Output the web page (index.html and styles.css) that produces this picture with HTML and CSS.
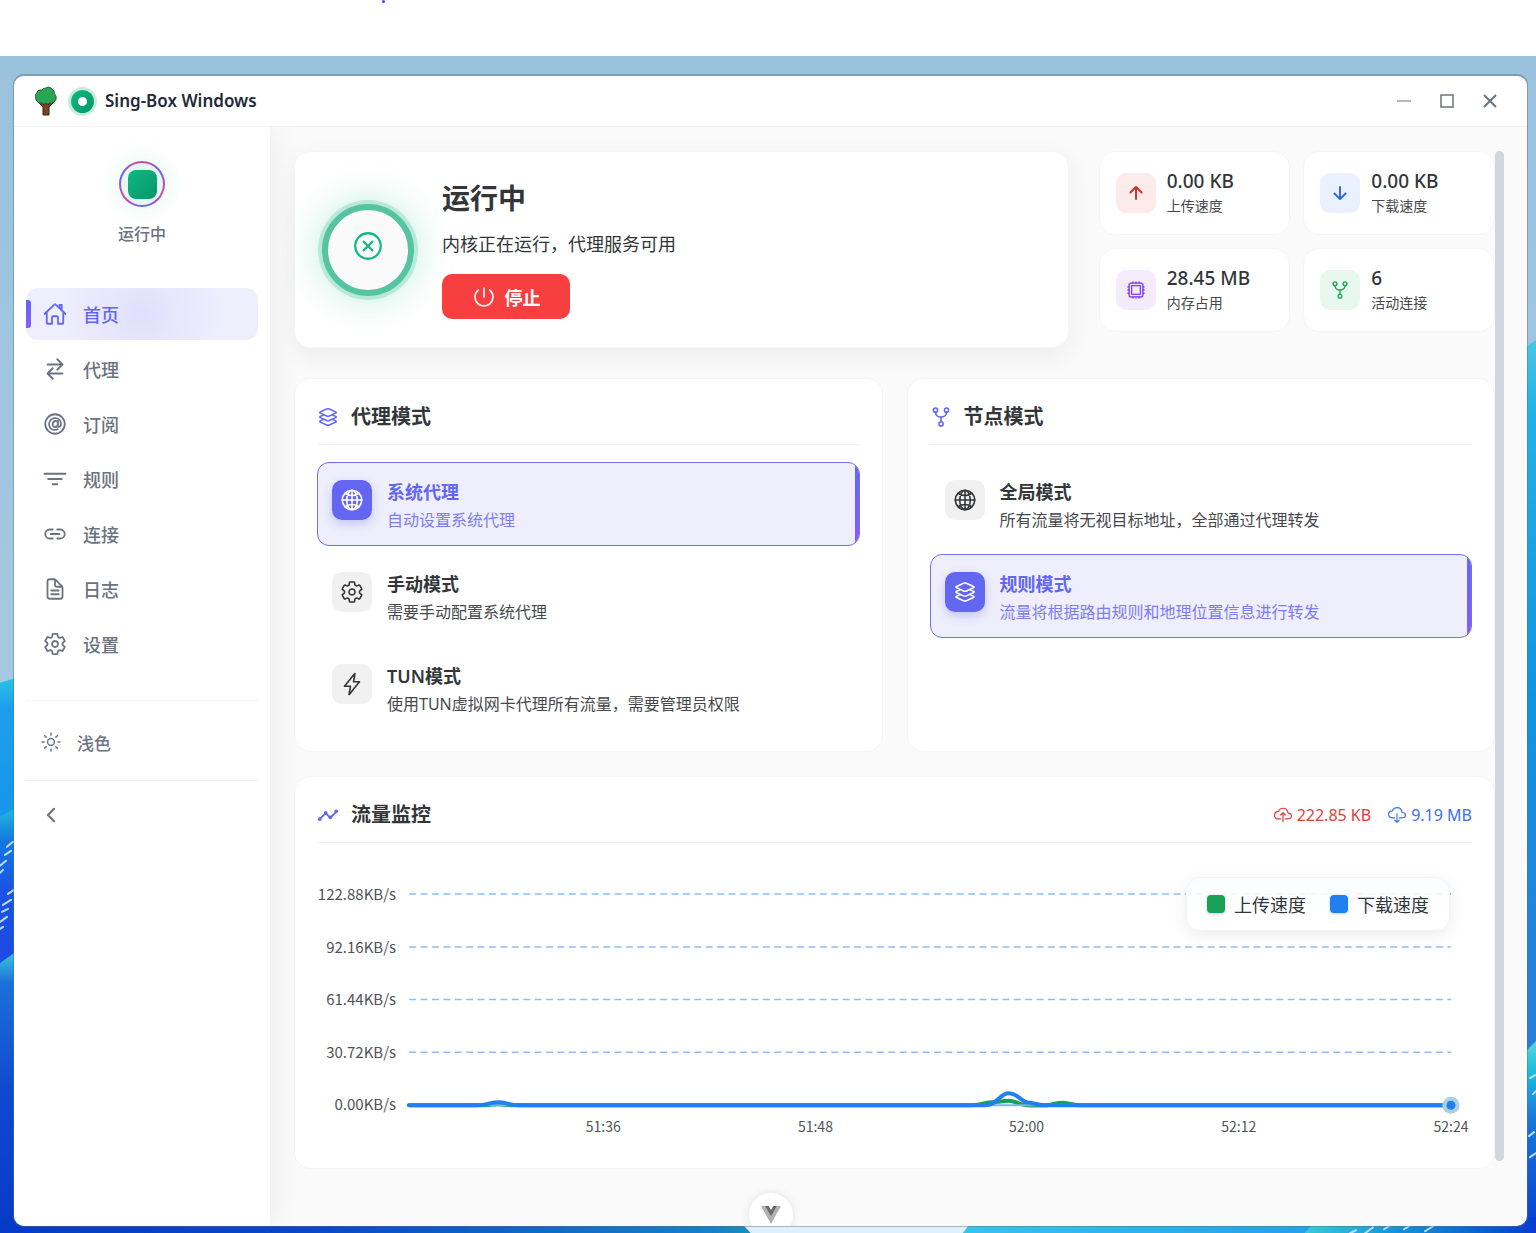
FILE: index.html
```html
<!DOCTYPE html>
<html lang="zh-CN">
<head>
<meta charset="utf-8">
<meta name="viewport" content="width=device-width, initial-scale=1">
<title>Sing-Box Windows</title>
<link rel="stylesheet" href="styles.css">
</head>
<body>
<svg class="sprite" aria-hidden="true">
  <symbol id="home" viewBox="0 0 512 512"><path d="M80 212v236a16 16 0 0 0 16 16h96V328a24 24 0 0 1 24-24h80a24 24 0 0 1 24 24v136h96a16 16 0 0 0 16-16V212M480 256L266.89 52c-5-5.28-16.69-5.34-21.78 0L32 256M400 179V64h-48v69"/></symbol>
  <symbol id="swap" viewBox="0 0 512 512"><path d="M304 48l112 112-112 112M398.87 160H96M208 464L96 352l112-112M114 352h302"/></symbol>
  <symbol id="at" viewBox="0 0 512 512"><circle cx="256" cy="256" r="208"/><path d="M320 254c-4 36-28 66-64 66-34 0-54-24-50-64 4-36 30-64 64-64 36 0 54 26 50 62zM322 196l-9 78c-3 28 8 42 28 42 26 0 41-30 41-62 0-72-52-124-122-124-76 0-130 56-130 126 0 76 54 126 128 126 22 0 42-5 58-14"/></symbol>
  <symbol id="filter" viewBox="0 0 512 512"><path d="M32 144h448M112 256h288M208 368h96"/></symbol>
  <symbol id="link" viewBox="0 0 512 512"><path d="M208 352h-64a96 96 0 0 1 0-192h64M304 160h64a96 96 0 0 1 0 192h-64M163.29 256h187.42"/></symbol>
  <symbol id="doc" viewBox="0 0 512 512"><path d="M416 221.25V416a48 48 0 0 1-48 48H144a48 48 0 0 1-48-48V96a48 48 0 0 1 48-48h98.75a32 32 0 0 1 22.62 9.37l141.26 141.26a32 32 0 0 1 9.37 22.62zM256 56v120a32 32 0 0 0 32 32h120M176 288h160M176 368h160"/></symbol>
  <symbol id="gear" viewBox="0 0 512 512"><path d="M262.29 192.31a64 64 0 1 0 57.4 57.4 64.13 64.13 0 0 0-57.4-57.4zM416.39 256a154.34 154.34 0 0 1-1.53 20.79l45.21 35.46a10.81 10.81 0 0 1 2.45 13.75l-42.77 74a10.81 10.81 0 0 1-13.14 4.59l-44.9-18.08a16.11 16.11 0 0 0-15.17 1.75A164.48 164.48 0 0 1 325 400.8a15.94 15.94 0 0 0-8.82 12.14l-6.73 47.89a11.08 11.08 0 0 1-10.68 9.17h-85.54a11.11 11.11 0 0 1-10.69-8.87l-6.72-47.82a16.07 16.07 0 0 0-9-12.22 155.3 155.3 0 0 1-21.46-12.57 16 16 0 0 0-15.11-1.71l-44.89 18.07a10.81 10.81 0 0 1-13.14-4.58l-42.77-74a10.8 10.8 0 0 1 2.45-13.75l38.21-30a16.05 16.05 0 0 0 6-14.08c-.36-4.17-.58-8.33-.58-12.5s.21-8.27.58-12.35a16 16 0 0 0-6.07-13.94l-38.19-30A10.81 10.81 0 0 1 49.48 186l42.77-74a10.81 10.81 0 0 1 13.14-4.59l44.9 18.08a16.11 16.11 0 0 0 15.17-1.75A164.48 164.48 0 0 1 187 111.2a15.94 15.94 0 0 0 8.82-12.14l6.73-47.89A11.08 11.08 0 0 1 213.23 42h85.54a11.11 11.11 0 0 1 10.69 8.87l6.72 47.82a16.07 16.07 0 0 0 9 12.22 155.3 155.3 0 0 1 21.46 12.57 16 16 0 0 0 15.11 1.71l44.89-18.07a10.81 10.81 0 0 1 13.14 4.58l42.77 74a10.8 10.8 0 0 1-2.45 13.75l-38.21 30a16.05 16.05 0 0 0-6.05 14.08c.33 4.14.55 8.3.55 12.47z"/></symbol>
  <symbol id="sun" viewBox="0 0 512 512"><path d="M256 48v48M256 416v48M403.08 108.92l-33.94 33.94M142.86 369.14l-33.94 33.94M464 256h-48M96 256H48M403.08 403.08l-33.94-33.94M142.86 142.86l-33.94-33.94"/><circle cx="256" cy="256" r="80"/></symbol>
  <symbol id="back" viewBox="0 0 512 512"><path d="M328 112L184 256l144 144"/></symbol>
  <symbol id="close-circle" viewBox="0 0 512 512"><circle cx="256" cy="256" r="192"/><path d="M320 320L192 192M192 320l128-128"/></symbol>
  <symbol id="power" viewBox="0 0 512 512"><path d="M378 108a191.41 191.41 0 0 1 70 148c0 106-86 192-192 192S64 362 64 256a192 192 0 0 1 69-148M256 64v192"/></symbol>
  <symbol id="layers" viewBox="0 0 512 512"><path d="M434.8 137.65l-149.36-68.1c-16.19-7.4-42.69-7.4-58.88 0L77.3 137.65c-17.6 8-17.6 21.09 0 29.09l148 67.5c16.89 7.7 44.69 7.7 61.58 0l148-67.5c17.52-8 17.52-21.1-.08-29.09zM160 308.52l-82.7 37.11c-17.6 8-17.6 21.1 0 29.1l148 67.5c16.89 7.69 44.69 7.69 61.58 0l148-67.5c17.6-8 17.6-21.1 0-29.1l-79.94-38.47M160 204.48l-82.8 37.16c-17.6 8-17.6 21.1 0 29.1l148 67.49c16.89 7.7 44.69 7.7 61.58 0l148-67.49c17.7-8 17.7-21.1.1-29.1L352 204.48"/></symbol>
  <symbol id="branch" viewBox="0 0 512 512"><circle cx="128" cy="96" r="48"/><circle cx="384" cy="96" r="48"/><circle cx="256" cy="416" r="48"/><path d="M128 144c0 74.67 68.92 112 128 112 59.08 0 128-37.33 128-112M256 368V256"/></symbol>
  <symbol id="globe" viewBox="0 0 512 512"><circle cx="256" cy="256" r="208"/><path d="M256 48c-58.07 0-112.67 93.13-112.67 208S197.93 464 256 464s112.67-93.13 112.67-208S314.07 48 256 48zM117.33 117.33c38.24 27.15 86.38 43.34 138.67 43.34s100.43-16.19 138.67-43.34M394.67 394.67c-38.24-27.15-86.38-43.34-138.67-43.34s-100.43 16.19-138.67 43.34M256 48v416M464 256H48"/></symbol>
  <symbol id="flash" viewBox="0 0 512 512"><path d="M315.27 33L96 304h128l-31.51 173.23a2.36 2.36 0 0 0 2.33 2.77 2.36 2.36 0 0 0 1.89-.95L416 208H288l31.66-173.25a2.45 2.45 0 0 0-2.44-2.75 2.42 2.42 0 0 0-1.95 1z"/></symbol>
  <symbol id="up" viewBox="0 0 512 512"><path d="M112 244l144-144 144 144M256 120v292"/></symbol>
  <symbol id="down" viewBox="0 0 512 512"><path d="M112 268l144 144 144-144M256 392V100"/></symbol>
  <symbol id="chip" viewBox="0 0 512 512"><rect x="80" y="80" width="352" height="352" rx="48"/><rect x="144" y="144" width="224" height="224" rx="16"/><path d="M256 80V48M336 80V48M176 80V48M256 464v-32M336 464v-32M176 464v-32M432 256h32M432 336h32M432 176h32M48 256h32M48 336h32M48 176h32"/></symbol>
  <symbol id="cloud-up" viewBox="0 0 512 512"><path d="M320 367.79h76c55 0 100-29.21 100-83.6s-53-81.47-96-83.6c-8.89-85.06-71-136.8-144-136.8-69 0-113.44 45.79-128 91.2-60 5.7-112 43.88-112 106.4s54 106.4 120 106.4h56M320 255.79l-64-64-64 64M256 448.21V207.79"/></symbol>
  <symbol id="cloud-down" viewBox="0 0 512 512"><path d="M320 336h76c55 0 100-21.21 100-75.6s-53-73.47-96-75.6C391.11 99.74 329 48 256 48c-69 0-113.44 45.79-128 91.2-60 5.7-112 35.88-112 98.4S70 336 136 336h56M192 400.1l64 63.9 64-63.9M256 224v224.03"/></symbol>
  <symbol id="timeline" viewBox="0 0 24 24"><path d="M3 16.5L9.500 10l5 5L21 8.500"/><g fill="currentColor" stroke="none"><circle cx="3" cy="16.500" r="2"/><circle cx="9.500" cy="9.500" r="2"/><circle cx="14.500" cy="14.500" r="2"/><circle cx="21" cy="8" r="2"/></g></symbol>
</svg>

<div class="page-top"><span class="link-mark"></span></div>

<div class="desktop">
  <svg class="wallpaper" viewBox="0 0 1536 1177" preserveAspectRatio="none" aria-hidden="true">
    <defs>
      <linearGradient id="sky" x1="0" y1="0" x2="0" y2="1"><stop offset="0" stop-color="#9bc2dd"/><stop offset="1" stop-color="#abcfe4"/></linearGradient>
      <linearGradient id="l1" x1="0" y1="0" x2="0" y2="1"><stop offset="0" stop-color="#2cc4e6"/><stop offset=".2" stop-color="#1f9fea"/><stop offset="1" stop-color="#1594ea"/></linearGradient>
      <linearGradient id="l2" x1="0" y1="0" x2="0" y2="1"><stop offset="0" stop-color="#22c0de"/><stop offset=".2" stop-color="#1478e0"/><stop offset=".5" stop-color="#1b52e4"/><stop offset="1" stop-color="#1f48e2"/></linearGradient>
      <linearGradient id="l3" x1="0" y1="0" x2="0" y2="1"><stop offset="0" stop-color="#3fd0da"/><stop offset=".12" stop-color="#1c70d8"/><stop offset=".5" stop-color="#1048d0"/><stop offset="1" stop-color="#083ac8"/></linearGradient>
      <linearGradient id="r1" x1="0" y1="0" x2="0" y2="1"><stop offset="0" stop-color="#4cc6e6"/><stop offset=".1" stop-color="#22b2e6"/><stop offset=".5" stop-color="#1094e0"/><stop offset="1" stop-color="#2a7cd8"/></linearGradient>
      <linearGradient id="r2" x1="0" y1="0" x2="0" y2="1"><stop offset="0" stop-color="#5cd4dc"/><stop offset=".15" stop-color="#1cc0dc"/><stop offset=".4" stop-color="#1a78dc"/><stop offset="1" stop-color="#083cd0"/></linearGradient>
      <linearGradient id="b1"><stop offset="0" stop-color="#083ac8"/><stop offset=".4" stop-color="#0c44cc"/><stop offset=".95" stop-color="#1880c8"/><stop offset="1" stop-color="#1a90b8"/></linearGradient>
      <linearGradient id="b2"><stop offset="0" stop-color="#38c4ea"/><stop offset="1" stop-color="#1fa2e8"/></linearGradient>
      <linearGradient id="b3"><stop offset="0" stop-color="#30cfd6"/><stop offset=".4" stop-color="#1493d8"/><stop offset="1" stop-color="#083cd0"/></linearGradient>
    </defs>
    <rect width="1536" height="1177" fill="url(#sky)"/>
    <path d="M0 626L20 620V770H0z" fill="url(#l1)"/>
    <path d="M0 760L20 749V920H0z" fill="url(#l2)"/>
    <path d="M0 906L20 892V1177H0z" fill="url(#l3)"/>
    <path d="M1520 294L1536 284V1000H1520z" fill="url(#r1)"/>
    <path d="M1520 1000L1536 984V1177H1520z" fill="url(#r2)"/>
    <path d="M0 1160H736L752 1177H0z" fill="url(#b1)"/>
    <path d="M736 1160H975L962 1177H752z" fill="#dfeffb"/>
    <path d="M975 1160H1320L1304 1177H962z" fill="url(#b2)"/>
    <path d="M1320 1160H1536V1177H1304z" fill="url(#b3)"/>
    <path d="M7 790l6-5M5 798l6-4M0 809l6-5M0 816l3-3M8 837l6-4M3 848l8-5M2 855l6-3M0 865l7-5M0 872l3-2M1530 1021l5-3M1533 1037l3-3M1529 1079l5-4M1530 1100l6-4M1365 1176l8-6M1384 1172l8-5M1404 1172l8-5M1425 1174l8-5M1350 1176l6-3" stroke="#b9dcfa" stroke-width="2" stroke-linecap="round"/>
  </svg>

  <div class="window">
    <header class="titlebar">
      <svg class="tree" viewBox="0 0 22 30" aria-hidden="true"><path d="M8 29V21L4 17l2-1 3 3 2-4 2 4 3-3 2 1-4 4v8z" fill="#7a431d" stroke="#30271f" stroke-width="1"/><path d="M7 4Q8 2 11 2q2-2 5 0 1 2 3 3 0 3 2 5 1 4-2 6-2 2-5 1-1 2-3 0-2 2-4 0-4 1-6-3 0-2-1-3 0-3 2-4 0-3 3-3z" fill="#27a653" stroke="#31583c" stroke-width="1"/></svg>
      <span class="app-dot"></span>
      <h1 class="app-name">Sing-Box Windows</h1>
      <div class="controls">
        <button class="ctl" type="button" aria-label="最小化"><svg viewBox="0 0 16 16"><path d="M1 8H15" stroke-width="1"/></svg></button>
        <button class="ctl" type="button" aria-label="最大化"><svg viewBox="0 0 16 16"><path d="M2 2H14V14H2z" stroke-width="1.500"/></svg></button>
        <button class="ctl" type="button" aria-label="关闭"><svg viewBox="0 0 16 16"><path d="M2 2L14 14M14 2L2 14" stroke-width="2"/></svg></button>
      </div>
    </header>

    <div class="body">
      <aside class="sidebar">
        <div class="badge"><span class="badge-core"></span></div>
        <p class="badge-label">运行中</p>
        <nav class="nav">
          <a class="nav-item active" href="#home"><svg class="icon"><use href="#home"/></svg>首页</a>
          <a class="nav-item" href="#proxy"><svg class="icon"><use href="#swap"/></svg>代理</a>
          <a class="nav-item" href="#sub"><svg class="icon"><use href="#at"/></svg>订阅</a>
          <a class="nav-item" href="#rules"><svg class="icon"><use href="#filter"/></svg>规则</a>
          <a class="nav-item" href="#connections"><svg class="icon"><use href="#link"/></svg>连接</a>
          <a class="nav-item" href="#logs"><svg class="icon"><use href="#doc"/></svg>日志</a>
          <a class="nav-item" href="#settings"><svg class="icon"><use href="#gear"/></svg>设置</a>
        </nav>
        <div class="side-foot theme"><button class="side-btn" type="button"><svg class="icon"><use href="#sun"/></svg>浅色</button></div>
        <div class="side-foot collapse"><button class="side-btn" type="button" aria-label="收起"><svg class="icon bold"><use href="#back"/></svg></button></div>
      </aside>

      <main class="main">
        <div class="content">
          <div class="top-row">
            <section class="card status">
              <div class="ring"><svg class="icon"><use href="#close-circle"/></svg></div>
              <div class="status-text">
                <h2 class="status-title">运行中</h2>
                <p class="status-desc">内核正在运行，代理服务可用</p>
                <button class="stop" type="button"><svg class="icon"><use href="#power"/></svg>停止</button>
              </div>
            </section>
            <section class="stats">
              <div class="card stat"><span class="tile red"><svg class="icon bold"><use href="#up"/></svg></span><div><p class="stat-value">0.00 KB</p><p class="stat-label">上传速度</p></div></div>
              <div class="card stat"><span class="tile blue"><svg class="icon bold"><use href="#down"/></svg></span><div><p class="stat-value">0.00 KB</p><p class="stat-label">下载速度</p></div></div>
              <div class="card stat"><span class="tile purple"><svg class="icon"><use href="#chip"/></svg></span><div><p class="stat-value">28.45 MB</p><p class="stat-label">内存占用</p></div></div>
              <div class="card stat"><span class="tile green"><svg class="icon"><use href="#branch"/></svg></span><div><p class="stat-value">6</p><p class="stat-label">活动连接</p></div></div>
            </section>
          </div>

          <div class="mode-row">
            <section class="card panel">
              <header class="panel-head"><svg class="icon"><use href="#layers"/></svg><h2 class="panel-title">代理模式</h2></header>
              <div class="options">
                <button class="option selected" type="button" aria-pressed="true"><span class="tile"><svg class="icon"><use href="#globe"/></svg></span><span class="option-text"><span class="option-title">系统代理</span><span class="option-desc">自动设置系统代理</span></span></button>
                <button class="option" type="button" aria-pressed="false"><span class="tile"><svg class="icon"><use href="#gear"/></svg></span><span class="option-text"><span class="option-title">手动模式</span><span class="option-desc">需要手动配置系统代理</span></span></button>
                <button class="option" type="button" aria-pressed="false"><span class="tile"><svg class="icon"><use href="#flash"/></svg></span><span class="option-text"><span class="option-title">TUN模式</span><span class="option-desc">使用TUN虚拟网卡代理所有流量，需要管理员权限</span></span></button>
              </div>
            </section>
            <section class="card panel">
              <header class="panel-head"><svg class="icon"><use href="#branch"/></svg><h2 class="panel-title">节点模式</h2></header>
              <div class="options">
                <button class="option" type="button" aria-pressed="false"><span class="tile"><svg class="icon"><use href="#globe"/></svg></span><span class="option-text"><span class="option-title">全局模式</span><span class="option-desc">所有流量将无视目标地址，全部通过代理转发</span></span></button>
                <button class="option selected" type="button" aria-pressed="true"><span class="tile"><svg class="icon"><use href="#layers"/></svg></span><span class="option-text"><span class="option-title">规则模式</span><span class="option-desc">流量将根据路由规则和地理位置信息进行转发</span></span></button>
              </div>
            </section>
          </div>

          <section class="card panel">
            <header class="panel-head"><svg class="icon"><use href="#timeline"/></svg><h2 class="panel-title">流量监控</h2>
              <div class="totals">
                <span class="total up"><svg class="icon"><use href="#cloud-up"/></svg>222.85 KB</span>
                <span class="total down"><svg class="icon"><use href="#cloud-down"/></svg>9.19 MB</span>
              </div>
            </header>
            <div class="chart">
              <svg class="plot" viewBox="0 0 1154 285">
                <g class="grid"><path d="M92 34H1133"/><path d="M92 87H1133"/><path d="M92 139.500H1133"/><path d="M92 192H1133"/></g>
                <g class="y-labels"><text x="79" y="40">122.88KB/s</text><text x="79" y="93">92.16KB/s</text><text x="79" y="145">61.44KB/s</text><text x="79" y="198">30.72KB/s</text><text x="79" y="250">0.00KB/s</text></g>
                <path class="line-up" d="M92 245H165C172 245 176 244 181 244S190 245 197 245H655C664 245 668 242 675 242S684 240.500 691 240.500 700 244.500 709 245 730 245 733 244.500 740 242.500 745 242.500 754 245 762 245H1133"/>
                <path class="base" d="M92 245H1133"/>
                <path class="line-down" d="M92 245H160C170 245 173 242 181 242S192 245 202 245H668C680 245 682 233 691 233S703 241 709 242C716 242.500 718 245 729 245H1133"/>
                <circle cx="1133" cy="245" r="8.500" fill="#a8d3dd"/><circle cx="1133" cy="245" r="4.500" fill="#2080f0"/>
                <g class="x-labels"><text x="286" y="272">51:36</text><text x="498" y="272">51:48</text><text x="709" y="272">52:00</text><text x="921" y="272">52:12</text><text x="1133" y="272">52:24</text></g>
              </svg>
              <div class="legend"><span class="key"><i class="swatch g"></i>上传速度</span><span class="key"><i class="swatch b"></i>下载速度</span></div>
            </div>
          </section>
        </div>
        <div class="scroll-thumb"></div>
      </main>
    </div>
    <button class="devtools" type="button" aria-label="Vue"><svg viewBox="0 0 20 18"><path d="M0 0H4L10 10.500 16 0H20L10 18z" fill="#b0b0b0"/><path d="M4 0H7.700L10 4 12.300 0H16L10 10.500z" fill="#6a6a6a"/></svg></button>
  </div>
</div>
</body>
</html>
```
FILE: styles.css
```css
* { box-sizing: border-box; }
body {
  margin: 0;
  min-height: 100vh;
  display: flex;
  flex-direction: column;
  background: #fff;
  color: #333639;
  font-family: "Noto Sans", "Noto Sans CJK SC", sans-serif;
}
h1, h2, p { margin: 0; }
button { font: inherit; color: inherit; border: 0; background: none; padding: 0; cursor: pointer; }
.sprite { position: absolute; width: 0; height: 0; }
.icon {
  width: 24px;
  height: 24px;
  flex: none;
  fill: none;
  stroke: currentColor;
  stroke-width: 34px;
  stroke-linecap: round;
  stroke-linejoin: round;
}
.icon.bold { stroke-width: 48px; }
#timeline { stroke-width: 2px; }

.page-top { height: 56px; padding-left: 382px; }
.link-mark { display: block; width: 3px; height: 3px; border-radius: 2px; background: #4a3df5; }

.desktop { position: relative; flex: 1; display: flex; padding: 20px 9px 8px 14px; overflow: hidden; }
.wallpaper { position: absolute; inset: 0; width: 100%; height: 100%; }

.window {
  position: relative;
  isolation: isolate;
  flex: 1;
  min-width: 0;
  display: flex;
  flex-direction: column;
  border-radius: 10px;
  overflow: hidden;
  background: #fafafa;
}
.desktop::after {
  content: "";
  position: absolute;
  inset: 18px 8px 7px 13px;
  border: 2px solid rgba(90, 110, 130, .45);
  border-width: 2px 1px 1px;
  border-radius: 11px;
  pointer-events: none;
}
.titlebar {
  position: relative;
  z-index: 2;
  display: flex;
  align-items: center;
  height: 51px;
  padding: 0 16px 0 21px;
  background: #fff;
  border-bottom: 1px solid #f2f2f3;
}
.tree { width: 22px; height: 30px; }
.app-dot {
  width: 23px;
  height: 23px;
  margin: 0 11px 0 14px;
  border-radius: 50%;
  background: radial-gradient(circle, #fff 0 4px, transparent 5px), linear-gradient(135deg, #10b981, #059669);
  box-shadow: 0 0 0 3px #c9ecdf;
}
.app-name { font-size: 17px; line-height: 26px; font-weight: 600; color: #1f2937; }
.controls { display: flex; margin-left: auto; }
.ctl { width: 43px; height: 36px; display: grid; place-items: center; color: #6b7280; }
.ctl svg { width: 16px; height: 16px; fill: none; stroke: currentColor; }

.body { flex: 1; display: flex; }
.sidebar {
  position: relative;
  z-index: 1;
  width: 256px;
  flex: none;
  padding: 34px 12px 24px;
  background: #fff;
  box-shadow: 0 0 30px rgba(0, 0, 0, .07);
  color: #6b7280;
}
.badge {
  width: 46px;
  height: 46px;
  margin: 0 auto;
  display: grid;
  place-items: center;
  border-radius: 50%;
  border: 2px solid transparent;
  background: linear-gradient(#e9f7f2, #e9f7f2) padding-box, conic-gradient(#d946a0, #6366f1 17%, #d946a0 28%, #6366f1 50%, #d946a0 65%, #6366f1 80%, #d946a0) border-box;
  box-shadow: 0 0 24px rgba(16, 185, 129, .15);
}
.badge-core { width: 29px; height: 29px; border-radius: 8px; background: linear-gradient(135deg, #10b981, #059669); }
.badge-label { margin-top: 15px; text-align: center; font-size: 16px; line-height: 24px; font-weight: 500; }
.nav { display: flex; flex-direction: column; gap: 3px; margin-top: 42px; }
.nav-item {
  display: flex;
  align-items: center;
  gap: 16px;
  height: 52px;
  padding-left: 17px;
  border-radius: 12px;
  font-size: 18px;
  font-weight: 500;
  color: inherit;
  text-decoration: none;
}
.nav-item .icon { stroke-width: 38px; }
.nav-item.active {
  position: relative;
  color: #6366f1;
  background: radial-gradient(circle at 50% 50%, #e0e0fc, #efeefd 80px);
}
.nav-item.active::before {
  content: "";
  position: absolute;
  left: 0;
  top: 12px;
  width: 5px;
  height: 28px;
  border-radius: 0 3px 3px 0;
  background: linear-gradient(#6366f1, #8b5cf6);
}
.side-foot { border-top: 1px solid #f5f5f6; }
.theme { margin-top: 30px; padding: 22px 0 19px; }
.collapse { padding-top: 15px; border-color: #f0f0f1; }
.side-btn {
  display: flex;
  align-items: center;
  gap: 15px;
  width: 100%;
  height: 38px;
  padding-left: 14px;
  font-size: 17px;
  font-weight: 500;
}
.side-btn .icon { width: 22px; height: 22px; }

.main { flex: 1; min-width: 0; display: flex; align-items: stretch; padding: 24px 23px 57px 24px; }
.content { flex: 1; min-width: 0; display: flex; flex-direction: column; gap: 24px; }
.scroll-thumb { width: 9px; margin-bottom: 8px; border-radius: 5px; background: #d1d5dd; }
.card { background: #fff; border: 1px solid #f5f5f6; border-radius: 16px; }

.top-row { display: grid; grid-template-columns: minmax(0, 1fr) 33%; gap: 30px; padding-bottom: 6px; }
.status {
  display: flex;
  align-items: center;
  gap: 28px;
  min-height: 197px;
  padding: 27px;
  box-shadow: 0 8px 24px rgba(0, 0, 0, .06);
}
.ring {
  width: 92px;
  height: 92px;
  padding-bottom: 8px;
  display: grid;
  place-items: center;
  flex: none;
  border: 6px solid #56c4a0;
  border-radius: 50%;
  background: #fafafa;
  color: #10b981;
  box-shadow: 0 0 0 4px #b9e9d8, 0 0 40px rgba(16, 185, 129, .3);
}
.ring .icon { width: 34px; height: 34px; }
.status-title { font-size: 28px; line-height: 36px; font-weight: 700; }
.status-desc { margin: 14px 0 16px; font-size: 18px; line-height: 28px; }
.stop {
  display: flex;
  align-items: center;
  justify-content: center;
  gap: 9px;
  width: 128px;
  height: 45px;
  border-radius: 10px;
  background: #f73f3f;
  color: #fff;
  font-size: 18px;
  font-weight: 700;
}
.stats { display: grid; grid-template-columns: 1fr 1fr; grid-auto-rows: 84px; gap: 13px; }
.stat { display: flex; align-items: center; gap: 11px; padding: 0 16px; }
.tile { width: 40px; height: 40px; flex: none; display: grid; place-items: center; border-radius: 10px; background: #f1f1f2; }
.tile .icon { width: 20px; height: 20px; }
.tile.red { background: #fdeaea; color: #dc2626; }
.tile.blue { background: #eaf0fe; color: #2563eb; }
.tile.purple { background: #f5ebfe; color: #7c3aed; }
.tile.green { background: #e8f8ee; color: #16a34a; }
.stat-value { font-size: 19px; line-height: 26px; font-weight: 500; white-space: nowrap; }
.stat-label { font-size: 14px; line-height: 24px; color: #46494c; }

.mode-row { display: grid; grid-template-columns: 1fr 1fr; gap: 24px; }
.panel { padding: 23px 22px 21px; }
.panel-head { display: flex; align-items: center; gap: 12px; padding-bottom: 12px; border-bottom: 1px solid #f1f1f2; }
.panel-head > .icon { color: #6366f1; width: 22px; height: 22px; stroke-width: 36px; }
.panel-title { font-size: 20px; line-height: 30px; font-weight: 600; }
.options { display: flex; flex-direction: column; gap: 8px; margin-top: 17px; }
.option {
  position: relative;
  display: flex;
  gap: 15px;
  padding: 17px 14px 13px;
  border: 1px solid transparent;
  border-radius: 12px;
  text-align: left;
  overflow: hidden;
}
.option .icon { width: 24px; height: 24px; }
.option-text { display: flex; flex-direction: column; gap: 4px; }
.option-title { font-size: 18px; line-height: 24px; font-weight: 600; }
.option-desc { font-size: 16px; line-height: 24px; color: #46494c; }
.option.selected { border-color: #6f72f3; background: #efeefc; color: #6366f1; }
.option.selected::after { content: ""; position: absolute; inset: 0 0 0 auto; width: 4px; background: linear-gradient(#6366f1, #8b5cf6); }
.option.selected .tile { background: #6366f1; color: #fff; box-shadow: 0 4px 10px rgba(99, 102, 241, .3); }
.option.selected .option-desc { color: #7b7df4; }

.totals { display: flex; gap: 17px; margin-left: auto; font-size: 16px; line-height: 24px; }
.total { display: flex; align-items: center; gap: 5px; }
.total .icon { width: 18px; height: 18px; }
.total.up { color: #e23c3c; }
.total.down { color: #3b6ff0; }

.chart { position: relative; margin: 17px 0 2px; }
.plot { display: block; width: 100%; height: auto; font-family: "Noto Sans CJK SC", sans-serif; }
.plot text { fill: #505356; }
.y-labels { font-size: 15px; text-anchor: end; }
.x-labels { font-size: 14px; text-anchor: middle; }
.grid path { stroke: #8cbffa; stroke-width: 1.5px; stroke-dasharray: 7 4.4; }
.line-up, .line-down, .base { fill: none; stroke-width: 4px; stroke-linecap: round; }
.line-up { stroke: #18a058; }
.line-down { stroke: #2080f0; }
.base { stroke: #7fb2ef; stroke-width: 2px; }
.legend {
  position: absolute;
  top: 17px;
  right: 22px;
  display: flex;
  align-items: center;
  gap: 24px;
  height: 54px;
  padding: 0 20px;
  border-radius: 14px;
  background: linear-gradient(rgba(250, 252, 255, .85), #fff 80%);
  border: 1px solid #f1f3f7;
  box-shadow: 0 4px 16px rgba(0, 0, 0, .08);
  font-size: 18px;
}
.key { display: flex; align-items: center; gap: 9px; }
.swatch { width: 18px; height: 18px; border-radius: 4px; box-shadow: 0 1px 3px rgba(0, 0, 0, .2); }
.swatch.g { background: #18a058; }
.swatch.b { background: #2080f0; }

.devtools {
  position: absolute;
  z-index: 2;
  left: 50%;
  bottom: -11px;
  width: 44px;
  height: 44px;
  margin-left: -22px;
  display: grid;
  place-items: center;
  border-radius: 50%;
  background: #fff;
  box-shadow: 0 0 10px rgba(0, 0, 0, .1);
}
.devtools svg { width: 20px; height: 18px; }
```
